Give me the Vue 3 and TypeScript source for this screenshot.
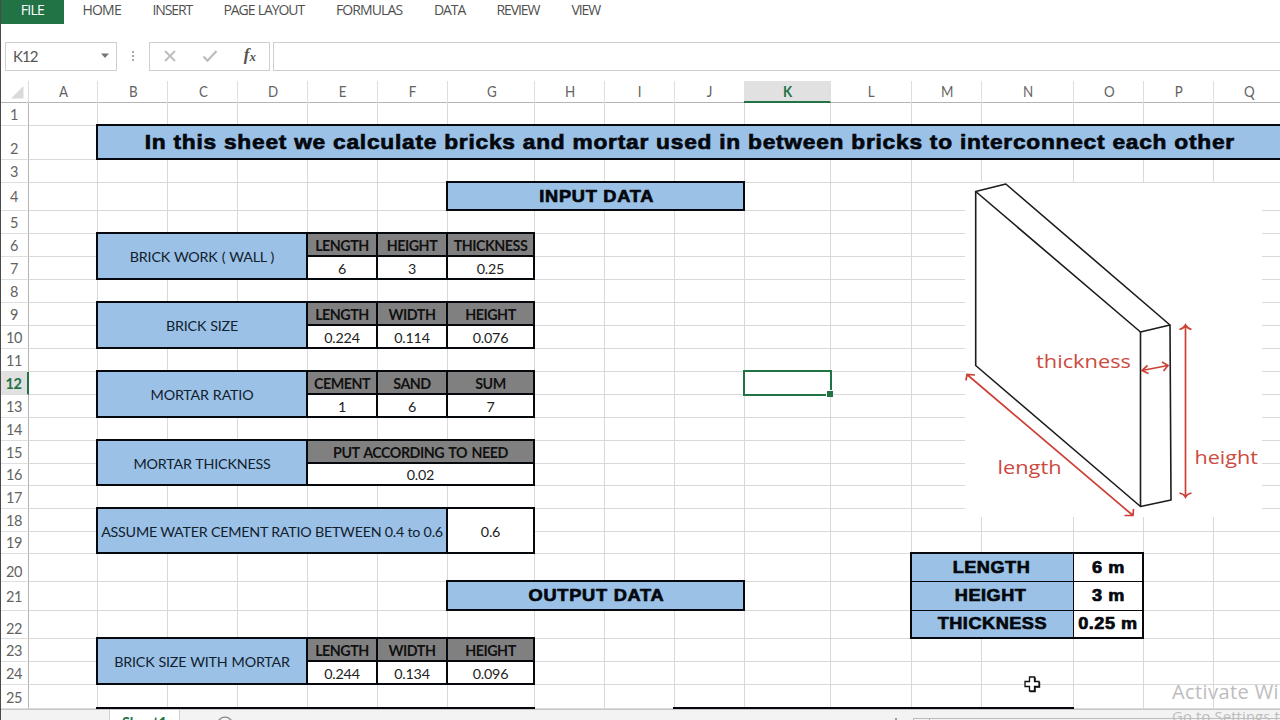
<script setup lang="ts">
interface Box {
  text: string
  c1: number
  c2: number
  r1: number
  r2: number
  kind: string
}

const tabs: { label: string; cls: string }[] = [
  { label: 'HOME', cls: 'home' },
  { label: 'INSERT', cls: 'insert' },
  { label: 'PAGE LAYOUT', cls: 'layout' },
  { label: 'FORMULAS', cls: 'formulas' },
  { label: 'DATA', cls: 'data' },
  { label: 'REVIEW', cls: 'review' },
  { label: 'VIEW', cls: 'view' },
]

const columns = 'ABCDEFGHIJKLMNOPQ'.split('')
const rows = Array.from({ length: 25 }, (_, i) => i + 1)

// Columns are 1-based (A = 1); c2 and r2 are inclusive.
const box = (text: string, c1: number, c2: number, r1: number, r2: number, kind: string): Box => ({
  text, c1, c2, r1, r2, kind,
})

const group = (title: string, row: number, heads: string[], values: string[]): Box[] => [
  box(title, 2, 4, row, row + 1, 'label'),
  ...heads.map((h, i) => box(h, 5 + i, 5 + i, row, row, 'head')),
  ...values.map((v, i) => box(v, 5 + i, 5 + i, row + 1, row + 1, 'value')),
]

const boxes: Box[] = [
  box('In this sheet we calculate bricks and mortar used in between bricks to interconnect each other', 2, 17, 2, 2, 'title'),
  box('INPUT DATA', 7, 10, 4, 4, 'section'),
  ...group('BRICK WORK ( WALL )', 6, ['LENGTH', 'HEIGHT', 'THICKNESS'], ['6', '3', '0.25']),
  ...group('BRICK SIZE', 9, ['LENGTH', 'WIDTH', 'HEIGHT'], ['0.224', '0.114', '0.076']),
  ...group('MORTAR RATIO', 12, ['CEMENT', 'SAND', 'SUM'], ['1', '6', '7']),
  box('MORTAR THICKNESS', 2, 4, 15, 16, 'label'),
  box('PUT ACCORDING TO NEED', 5, 7, 15, 15, 'head'),
  box('0.02', 5, 7, 16, 16, 'value'),
  box('ASSUME WATER CEMENT RATIO BETWEEN 0.4 to 0.6', 2, 6, 18, 19, 'label long'),
  box('0.6', 7, 7, 18, 19, 'value'),
  box('OUTPUT DATA', 7, 10, 21, 21, 'section'),
  ...group('BRICK SIZE WITH MORTAR', 23, ['LENGTH', 'WIDTH', 'HEIGHT'], ['0.244', '0.134', '0.096']),
  box('', 2, 5, 26, 26, 'label'),
  box('', 6, 7, 26, 26, 'value'),
  box('', 10, 14, 26, 26, 'label'),
]

const summary = [
  ['LENGTH', '6 m'],
  ['HEIGHT', '3 m'],
  ['THICKNESS', '0.25 m'],
]

const area = (b: Box) => ({ gridArea: `${b.r1} / ${b.c1 + 1} / ${b.r2 + 1} / ${b.c2 + 2}` })
</script>

<template>
  <div class="app">
    <nav class="ribbon">
      <span class="file"><span>FILE</span></span>
      <span v-for="t in tabs" :key="t.label" class="tab" :class="t.cls">{{ t.label }}</span>
    </nav>

    <div class="formula-bar">
      <div class="name-box">
        <span>K12</span>
        <svg width="10" height="6" viewBox="0 0 10 6"><path d="M1 .5h8L5 5z" fill="#777" /></svg>
      </div>
      <svg class="grip" width="4" height="14" viewBox="0 0 4 14"><path d="M1 1h2v2H1zM1 5h2v2H1zM1 9h2v2H1z" fill="#a8a8a8" /></svg>
      <div class="fx-box">
        <svg width="14" height="14" viewBox="0 0 14 14"><path d="M2 2l10 10M12 2L2 12" stroke="#bdbdbd" stroke-width="1.9" fill="none" /></svg>
        <svg width="16" height="14" viewBox="0 0 16 14"><path d="M1.5 7.5l4 4.2L14.5 2" stroke="#bdbdbd" stroke-width="2.2" fill="none" /></svg>
        <span class="fx">f<sub>x</sub></span>
      </div>
      <div class="input"></div>
    </div>

    <div class="sheet">
      <div class="col-heads tracks">
        <div class="corner"><svg width="13" height="13" viewBox="0 0 13 13"><path d="M12.5 0v12.5H0z" fill="#dadada" /></svg></div>
        <div v-for="c in columns" :key="c" class="col-head" :class="{ active: c === 'K' }"><span>{{ c }}</span></div>
      </div>
      <div class="cells tracks">
        <template v-for="r in rows" :key="r">
          <div class="row-head" :class="{ active: r === 12, middle: r === 4 || r === 21, low: r === 20 || r === 22 }" :style="{ gridArea: `${r} / 1` }"><span>{{ r }}</span></div>
          <div v-for="(c, i) in columns" :key="c + r" class="cell" :style="{ gridArea: `${r} / ${i + 2}` }"></div>
        </template>
        <div v-for="(b, i) in boxes" :key="'b' + i" class="box" :class="b.kind" :style="area(b)"><span>{{ b.text }}</span></div>
        <div class="summary">
          <template v-for="s in summary" :key="s[0]">
            <div class="s-label"><span>{{ s[0] }}</span></div>
            <div class="s-value"><span>{{ s[1] }}</span></div>
          </template>
        </div>
        <div class="selection"><i></i></div>
      </div>

      <svg class="picture" width="297" height="334" viewBox="965 183 297 334">
        <rect x="965" y="183" width="297" height="334" fill="#fff" />
        <g fill="none" stroke="#1c1c1c" stroke-width="1.6" stroke-linejoin="round">
          <path d="M975.7 191.5L1005.8 184L1170 325L1140.5 332Z" />
          <path d="M975.7 191.5V365.5L1140.5 506.5V332" />
          <path d="M1170 325L1171 500L1140.5 506.5" />
        </g>
        <g fill="none" stroke="#cc4036" stroke-width="1.7">
          <path d="M967 374.500L1133 515.500M966 380.500L967 374.500L975 375M1133.500 509L1133 515.500L1124.500 515.500" />
          <path d="M1185.500 325V497M1179.500 329.500Q1184 328 1185.500 325Q1187 328 1191.500 329.500M1179.500 493Q1184 494 1185.500 497Q1187 494 1191.500 493" />
          <path d="M1142 370.500L1168 365.500M1147.500 365.500L1142 370.500L1148.500 373.500M1162 362L1168 365.500L1163.500 371" />
        </g>
        <g fill="#cc4a40" font-family="'Open Sans', sans-serif" font-size="17.5">
          <text x="1036" y="367.5" textLength="95" lengthAdjust="spacingAndGlyphs">thickness</text>
          <text x="997.5" y="473.5" textLength="64" lengthAdjust="spacingAndGlyphs">length</text>
          <text x="1194.5" y="463.5" textLength="63.5" lengthAdjust="spacingAndGlyphs">height</text>
        </g>
      </svg>
      <svg class="cursor" width="18" height="18" viewBox="0 0 18 18">
        <path d="M6.500 2h5v4.500h4.500v5h-4.500v4.500h-5v-4.500H2v-5h4.500z" fill="#fff" stroke="#111" stroke-width="1.3" />
        <path d="M12.200 2.500v3.800M16.600 7v5.200h-4.400M12.200 12v4.600H7" stroke="#111" stroke-width="1.2" fill="none" />
      </svg>
    </div>

    <footer class="sheet-tabs">
      <div class="sheet-tab">Sheet1</div>
      <svg class="add" width="18" height="18" viewBox="0 0 18 18"><circle cx="9" cy="9" r="7.8" fill="none" stroke="#8a8a8a" stroke-width="1.2" /></svg>
      <i class="dots"></i>
      <div class="scroll"><i></i></div>
    </footer>

    <div class="watermark">
      <div class="w1">Activate Wi</div>
      <div class="w2">Go to Settings t</div>
    </div>
  </div>
</template>

<style>
body {
  margin: 0;
  overflow: hidden;
}
</style>

<style scoped>
.app {
  position: relative;
  box-sizing: border-box;
  width: 1280px;
  height: 720px;
  overflow: hidden;
  display: flex;
  flex-direction: column;
  background: #fff;
  border-left: 1px solid #4a4a4a;
  font-family: Lato, "Liberation Sans", sans-serif;
  color: #222;
}
.app * {
  box-sizing: border-box;
}
.ribbon {
  flex: none;
  height: 42px;
  display: flex;
  align-items: flex-start;
  font: 14px/20px "Open Sans", sans-serif;
  color: #505050;
  white-space: nowrap;
}
.file {
  width: 63px;
  height: 23.5px;
  margin-right: 18.5px;
  background: #217346;
  color: #fff;
  text-align: center;
  letter-spacing: -0.7px;
}
.tab {
  flex: none;
  letter-spacing: -1.1px;
}
.home { width: 70px; letter-spacing: -0.8px; }
.insert { width: 71px; }
.layout { width: 112.5px; word-spacing: 1px; }
.formulas { width: 98px; letter-spacing: -0.9px; }
.data { width: 62.5px; }
.review { width: 75px; }

.formula-bar {
  flex: none;
  height: 39px;
  display: flex;
  align-items: flex-start;
}
.name-box {
  width: 112px;
  height: 29px;
  margin-left: 4px;
  padding: 0 6px 1px 7px;
  border: 1px solid #cfcfcf;
  display: flex;
  align-items: center;
  justify-content: space-between;
  font-size: 15px;
  letter-spacing: -0.9px;
  color: #555;
}
.grip { margin: 8px 14px 0 14px; }
.fx-box {
  width: 121px;
  height: 29px;
  border: 1px solid #cfcfcf;
  display: flex;
  align-items: center;
  padding: 0 13px 1px;
  justify-content: space-between;
}
.fx {
  font: italic bold 17px/20px "Liberation Serif", serif;
  color: #555;
}
.fx sub { font-size: 13px; vertical-align: -1px; }
.input {
  flex: 1;
  height: 29px;
  margin-left: 3px;
  border: 1px solid #cfcfcf;
  border-right: 0;
}

.sheet {
  position: relative;
  flex: none;
  height: 628px;
  overflow: hidden;
}
.tracks {
  display: grid;
  grid-template-columns: 28px 69px 70px 70px 70px 70px 70px 87px 70px 70px 70px 86px 81px 70px 92px 70px 70px 70px;
  width: 1283px;
}
.col-heads {
  height: 22px;
  border-bottom: 1px solid #b4b4b4;
  font-size: 14.5px;
  color: #636363;
}
.corner {
  border-right: 1px solid #dcdcdc;
  padding: 5px 0 0 10px;
  line-height: 0;
}
.col-head {
  text-align: center;
  line-height: 22px;
  border-right: 1px solid #dedede;
}
.col-head span {
  display: inline-block;
  transform: translateX(0.5px) scaleX(0.92);
}
.col-head.active {
  height: 22px;
  margin-left: -1px;
  background: #e1e1e1;
  border-bottom: 2px solid #217346;
  color: #217346;
  font-weight: bold;
}
.cells {
  grid-template-rows: 23px 34px 23px 28px 23px 23px 23px 23px 23px 23px 23px 23px 23px 23px 23px 22px 23px 23px 22px 28px 29px 28px 23px 23px 24px 30px;
}
.row-head {
  display: flex;
  align-items: flex-end;
  justify-content: center;
  padding: 0 1px 1px 0;
  border-right: 1px solid #b4b4b4;
  border-bottom: 1px solid #dedede;
  font-size: 14.5px;
  line-height: 19px;
  letter-spacing: -0.5px;
  color: #636363;
}
.row-head.middle { padding-bottom: 4px; }
.row-head.low { padding-bottom: 0; }
.row-head.active {
  background: #e1e1e1;
  border-right: 2px solid #217346;
  color: #217346;
  font-weight: bold;
}
.cell {
  border-right: 1px solid #d9d9d9;
  border-bottom: 1px solid #d9d9d9;
}
.box {
  z-index: 1;
  margin: -2px 0 0 -2px;
  padding: 1px 0 0;
  border: 2px solid #05080c;
  display: flex;
  align-items: center;
  justify-content: center;
  white-space: nowrap;
  font-size: 14.3px;
  letter-spacing: -0.2px;
  background: #fff;
  color: #222;
}
.label {
  background: #9bc2e6;
  color: #12202e;
  word-spacing: 0.6px;
}
.long {
  word-spacing: 0;
  letter-spacing: -0.24px;
}
.head {
  background: #808080;
  color: #111;
  font-weight: bold;
  letter-spacing: -0.5px;
  word-spacing: 1.6px;
}
.title,
.section,
.summary {
  font-family: "Liberation Sans", Arial, sans-serif;
  font-weight: bold;
  color: #04080e;
  -webkit-text-stroke: 0.7px #04080e;
}
.title span,
.section span,
.summary span {
  display: inline-block;
}
.title {
  padding-top: 0;
  background: #9bc2e6;
  font-size: 21px;
  letter-spacing: 0.7px;
}
.title span { transform: scaleX(1.082); }
.section {
  background: #9bc2e6;
  font-size: 17px;
  letter-spacing: 0.7px;
}
.section span { transform: translateX(1px) scaleX(1.07); }
.summary {
  z-index: 1;
  grid-area: 20 / 14 / 23 / 17;
  margin: -2px 0 0 -2px;
  border: 2px solid #05080c;
  display: grid;
  grid-template-columns: 162px 1fr;
  grid-template-rows: 28px 29px 1fr;
  background: #fff;
  font-size: 17px;
  letter-spacing: 0.5px;
}
.summary span { transform: scaleX(1.065); }
.summary > div {
  display: flex;
  align-items: center;
  justify-content: center;
  white-space: nowrap;
  border-bottom: 1px solid #05080c;
}
.summary > div:nth-last-child(-n + 2) { border-bottom: 0; }
.s-label {
  background: #9bc2e6;
  border-right: 1px solid #05080c;
}
.summary > .s-label:not(:nth-last-child(2)) { padding-right: 3px; }
.selection {
  position: relative;
  z-index: 2;
  grid-area: 12 / 12;
  margin: -2px -1px -1px -2px;
  border: 2px solid #217346;
}
.selection i {
  position: absolute;
  right: -3px;
  bottom: -3px;
  width: 7px;
  height: 7px;
  background: #217346;
  border: solid #fff;
  border-width: 1px 0 0 1px;
}
.picture {
  position: absolute;
  left: 964px;
  top: 102px;
  z-index: 3;
}
.cursor {
  position: absolute;
  left: 1022px;
  top: 594px;
  z-index: 3;
}

.sheet-tabs {
  flex: none;
  height: 11px;
  display: flex;
  overflow: hidden;
  background: #f3f3f3;
  border-top: 1px solid #c6c6c6;
}
.sheet-tab {
  flex: none;
  width: 71px;
  height: 26px;
  margin-left: 108px;
  background: #fff;
  border: solid #d0d0d0;
  border-width: 0 1px;
  text-align: center;
  font: bold 14.5px/25px Lato, sans-serif;
  color: #217346;
}
.add { flex: none; margin: 6px 0 0 36px; }
.dots {
  flex: none;
  width: 2px;
  height: 2px;
  margin: 8px 0 0 661px;
  background: #999;
}
.scroll {
  flex: 1;
  height: 20px;
  margin: 8px 0 0 16px;
  border: solid #bdbdbd;
  border-width: 1px 0 0 1px;
}
.scroll i {
  display: block;
  width: 16px;
  height: 18px;
  border-right: 1px solid #aaa;
}
.watermark {
  position: absolute;
  left: 1171px;
  top: 679px;
  z-index: 5;
  white-space: nowrap;
  font-family: "Open Sans", sans-serif;
  color: #bdbdbd;
}
.w1 { font-size: 20px; line-height: 26px; letter-spacing: 0.4px; }
.w2 { font-size: 14.8px; line-height: 20px; margin-top: 1px; letter-spacing: 0.15px; }
</style>
